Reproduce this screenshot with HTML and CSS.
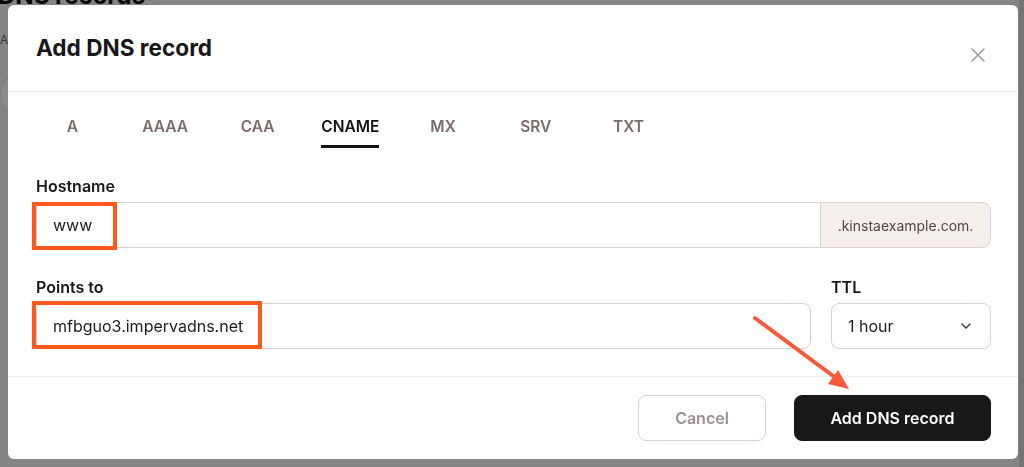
FILE: index.html
```html
<!DOCTYPE html>
<html lang="en">
<head>
<meta charset="utf-8">
<title>Add DNS record</title>
<link rel="stylesheet" href="styles.css">
</head>
<body>
<div class="page">
  <h1 class="page-title">DNS records</h1>
  <p class="page-sub">A</p>
  <div class="page-bar"><span class="page-chev">›</span></div>
</div>
<div class="scrollbar"></div>
<div class="overlay">
  <div class="modal">
    <div class="modal-head">
      <h2 class="modal-title">Add DNS record</h2>
      <button class="close" aria-label="Close">
        <svg width="14" height="14" viewBox="0 0 14 14"><path d="M1 1 L13 13 M13 1 L1 13" stroke="#a39797" stroke-width="1.5" fill="none" stroke-linecap="round"/></svg>
      </button>
    </div>
    <div class="modal-body">
      <div class="tabs">
        <div class="tab"><span class="tab-label">A</span></div>
        <div class="tab"><span class="tab-label">AAAA</span></div>
        <div class="tab"><span class="tab-label">CAA</span></div>
        <div class="tab active"><span class="tab-label">CNAME</span></div>
        <div class="tab"><span class="tab-label">MX</span></div>
        <div class="tab"><span class="tab-label">SRV</span></div>
        <div class="tab"><span class="tab-label">TXT</span></div>
      </div>
      <div class="field first">
        <label class="label">Hostname</label>
        <div class="input-group">
          <div class="input grow"><span class="value">www</span><span class="mark mark-host"></span></div>
          <div class="suffix">.kinstaexample.com.</div>
        </div>
      </div>
      <div class="row">
        <div class="field points">
          <label class="label">Points to</label>
          <div class="input solo"><span class="value">mfbguo3.impervadns.net</span><span class="mark mark-points"></span></div>
        </div>
        <div class="field ttl">
          <label class="label">TTL</label>
          <div class="input solo select"><span class="value">1 hour</span>
            <svg class="chev" width="12" height="8" viewBox="0 0 12 8"><path d="M2 2 L6 6 L10 2" stroke="#4a4446" stroke-width="1.6" fill="none" stroke-linecap="round" stroke-linejoin="round"/></svg>
          </div>
        </div>
      </div>
    </div>
    <div class="modal-foot">
      <button class="btn btn-cancel">Cancel</button>
      <button class="btn btn-primary">Add DNS record</button>
    </div>
  </div>
</div>
<svg class="arrow" width="1024" height="467" viewBox="0 0 1024 467">
  <line x1="755" y1="318" x2="840" y2="381" stroke="#fb5a3a" stroke-width="4" stroke-linecap="round"/>
  <polygon points="849,389 838,370 828,384" fill="#fb5a3a"/>
</svg>
</body>
</html>
```
FILE: styles.css
```css
* { box-sizing: border-box; }
html, body { margin: 0; padding: 0; }
body {
  width: 1024px;
  height: 467px;
  overflow: hidden;
  background: #f4f4f4;
  font-family: Inter, "Noto Sans", "Liberation Sans", sans-serif;
  color: #1c1a1b;
}
.page { padding: 0; }
.page-title {
  margin: -18px 0 0 -2px;
  font-size: 24px;
  line-height: 28px;
  font-weight: 700;
  color: #111;
}
.page-sub {
  margin: 23px 0 0 0;
  font-size: 12px;
  line-height: 14px;
  color: #666;
}
.page-bar {
  margin-top: 25px;
  height: 47px;
  width: 1040px;
  border: 1px solid #e2e2e2;
  border-radius: 23px;
  background: #fff;
  display: flex;
  align-items: center;
  justify-content: flex-end;
  padding-right: 20px;
}
.page-chev { font-size: 22px; font-weight: 700; color: #000; }
.scrollbar {
  position: fixed;
  top: 0;
  right: 0;
  width: 5px;
  height: 467px;
  background: #d8d8d8;
}
.overlay {
  position: fixed;
  inset: 0;
  background: rgba(0, 0, 0, 0.46);
  padding: 5px 0 0 8px;
}
.modal {
  width: 1010px;
  height: 454px;
  background: #fff;
  border-radius: 6px;
  display: flex;
  flex-direction: column;
}
.modal-head {
  height: 87px;
  border-bottom: 1px solid #efebea;
  display: flex;
  align-items: center;
  justify-content: space-between;
  padding: 0 33px 0 28px;
}
.modal-title {
  margin: 0;
  font-size: 22.6px;
  line-height: 28px;
  font-weight: 700;
  color: #1a1718;
}
.close {
  border: 0;
  background: none;
  padding: 0;
  width: 14px;
  height: 14px;
  margin-top: 13px;
  display: flex;
}
.modal-body {
  padding: 15px 27px 27px 28px;
  border-bottom: 1px solid #efebea;
}
.tabs {
  display: flex;
  margin-left: -10px;
}
.tab {
  width: 92.7px;
  text-align: center;
  padding-top: 10px;
  font-size: 15.5px;
  line-height: 20px;
  font-weight: 600;
  color: #7b6b6b;
}
.tab-label {
  display: inline-block;
  padding-bottom: 8px;
  border-bottom: 3px solid transparent;
}
.tab.active { color: #141213; }
.tab.active .tab-label { border-bottom-color: #141213; }
.field.first { margin-top: 28px; }
.label {
  display: block;
  font-size: 16px;
  line-height: 20px;
  font-weight: 600;
  color: #1a1718;
  margin-bottom: 6px;
}
.input-group {
  display: flex;
  height: 46px;
}
.input {
  position: relative;
  height: 46px;
  border: 1px solid #dacfcf;
  display: flex;
  align-items: center;
  padding: 0 16px;
  font-size: 16px;
  color: #1f1c1d;
}
.input.grow {
  flex: 1;
  border-radius: 0;
  border-right: 0;
}
.input.solo { border-radius: 8px; }
.suffix {
  width: 171px;
  border: 1px solid #dacfcf;
  border-radius: 0 9px 9px 0;
  background: #f5efeb;
  display: flex;
  align-items: center;
  justify-content: center;
  font-size: 14px;
  color: #4f4546;
}
.row {
  display: flex;
  gap: 20px;
  margin-top: 29px;
}
.points { flex: 1; }
.ttl { width: 160px; }
.select { justify-content: space-between; }
.chev { margin-right: 2px; }
.mark {
  position: absolute;
  border: 4px solid #ff5a1e;
  pointer-events: none;
}
.mark-host { left: -5px; top: -1px; width: 85px; height: 48px; }
.mark-points { left: -5px; top: -3px; width: 230px; height: 48px; }
.modal-foot {
  flex: 1;
  display: flex;
  justify-content: flex-end;
  align-items: flex-start;
  gap: 28px;
  padding: 18px 27px 0 0;
}
.btn {
  height: 46px;
  border-radius: 8px;
  font-family: inherit;
  font-size: 16px;
  font-weight: 600;
}
.btn-cancel {
  width: 128px;
  background: #fff;
  border: 1px solid #dacfcf;
  color: #9d9090;
}
.btn-primary {
  width: 197px;
  background: #1a1718;
  border: 1px solid #1a1718;
  color: #fff;
}
.arrow {
  position: fixed;
  top: 0;
  left: 0;
  pointer-events: none;
}
```
